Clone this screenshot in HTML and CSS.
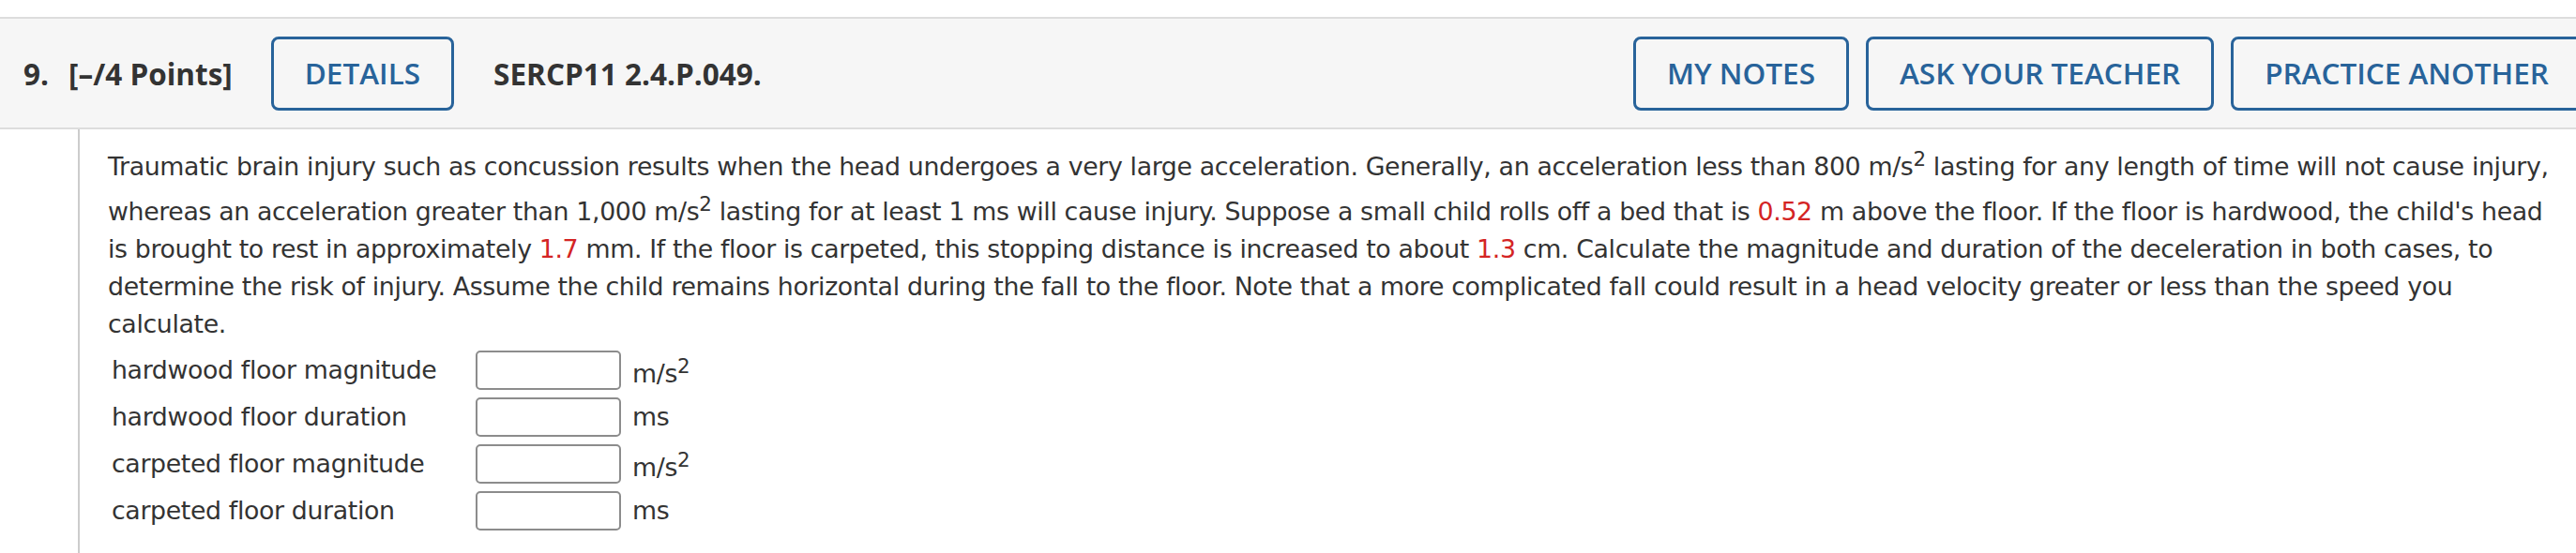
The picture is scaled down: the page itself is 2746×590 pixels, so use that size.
FILE: index.html
```html
<!DOCTYPE html>
<html lang="en">
<head>
<meta charset="utf-8">
<title>Question 9</title>
<link rel="stylesheet" href="styles.css">
</head>
<body>
<div class="qhead">
  <div class="qleft">
    <span class="qnum">9.</span><span class="qpts">[–/4 Points]</span>
    <button class="btn btn-details">DETAILS</button>
    <span class="qid">SERCP11 2.4.P.049.</span>
  </div>
  <div class="qright">
    <button class="btn">MY NOTES</button>
    <button class="btn">ASK YOUR TEACHER</button>
    <button class="btn">PRACTICE ANOTHER</button>
  </div>
</div>
<div class="qbody">
  <p class="qtext">Traumatic brain injury such as concussion results when the head undergoes a very large acceleration. Generally, an acceleration less than 800 m/s<sup>2</sup> lasting for any length of time will not cause injury, whereas an acceleration greater than 1,000 m/s<sup>2</sup> lasting for at least 1 ms will cause injury. Suppose a small child rolls off a bed that is <span class="red">0.52</span> m above the floor. If the floor is hardwood, the child's head is brought to rest in approximately <span class="red">1.7</span> mm. If the floor is carpeted, this stopping distance is increased to about <span class="red">1.3</span> cm. Calculate the magnitude and duration of the deceleration in both cases, to determine the risk of injury. Assume the child remains horizontal during the fall to the floor. Note that a more complicated fall could result in a head velocity greater or less than the speed you calculate.</p>
  <div class="answers">
    <span class="lab">hardwood floor magnitude</span><input class="inp" type="text"><span class="unit">m/s<sup>2</sup></span>
    <span class="lab">hardwood floor duration</span><input class="inp" type="text"><span class="unit">ms</span>
    <span class="lab">carpeted floor magnitude</span><input class="inp" type="text"><span class="unit">m/s<sup>2</sup></span>
    <span class="lab">carpeted floor duration</span><input class="inp" type="text"><span class="unit">ms</span>
  </div>
</div>
</body>
</html>
```
FILE: styles.css
```css
html, body {
  margin: 0;
  padding: 0;
  background: #ffffff;
  overflow: hidden;
}

.qhead {
  margin-top: 18px;
  margin-right: -7px;
  height: 116px;
  border-top: 2px solid #dddddd;
  border-bottom: 2px solid #dddddd;
  background: #f6f6f6;
  display: flex;
  align-items: center;
  justify-content: space-between;
  padding-left: 25px;
  font-family: "Open Sans", "Liberation Sans", sans-serif;
  font-size: 31.5px;
  font-weight: 700;
  color: #333333;
}

.qleft {
  display: flex;
  align-items: center;
}

.qnum {
  margin-right: 21px;
}

.qpts {
  margin-right: 41px;
}

.qid {
  margin-left: 42px;
}

.qright {
  display: flex;
  align-items: center;
  gap: 18px;
}

.btn {
  font-family: "Open Sans", "Liberation Sans", sans-serif;
  font-size: 31.5px;
  font-weight: 600;
  color: #28639a;
  background: transparent;
  border: 3.5px solid #28639a;
  border-radius: 8px;
  height: 79px;
  padding: 0 33px;
  box-sizing: border-box;
  line-height: 1;
  white-space: nowrap;
}

.qbody {
  margin-left: 83px;
  border-left: 2px solid #cccccc;
  padding: 12px 16px 0 30px;
  min-height: 440px;
  font-family: "DejaVu Sans", Verdana, sans-serif;
  font-size: 26.8px;
  letter-spacing: -0.37px;
  line-height: 40px;
  color: #333333;
}

.qtext {
  margin: 0;
}

.red {
  color: #d42424;
}

sup {
  font-size: 0.8em;
}

.answers {
  display: grid;
  grid-template-columns: 392px 155px auto;
  grid-auto-rows: 42px;
  row-gap: 8px;
  align-items: center;
  margin-top: 8px;
}

.lab {
  padding-left: 4px;
}

.inp {
  width: 155px;
  height: 42px;
  box-sizing: border-box;
  border: 2px solid #8c8c8c;
  border-radius: 5px;
  background: #ffffff;
  margin: 0;
}

.unit {
  margin-left: 12px;
}
```
